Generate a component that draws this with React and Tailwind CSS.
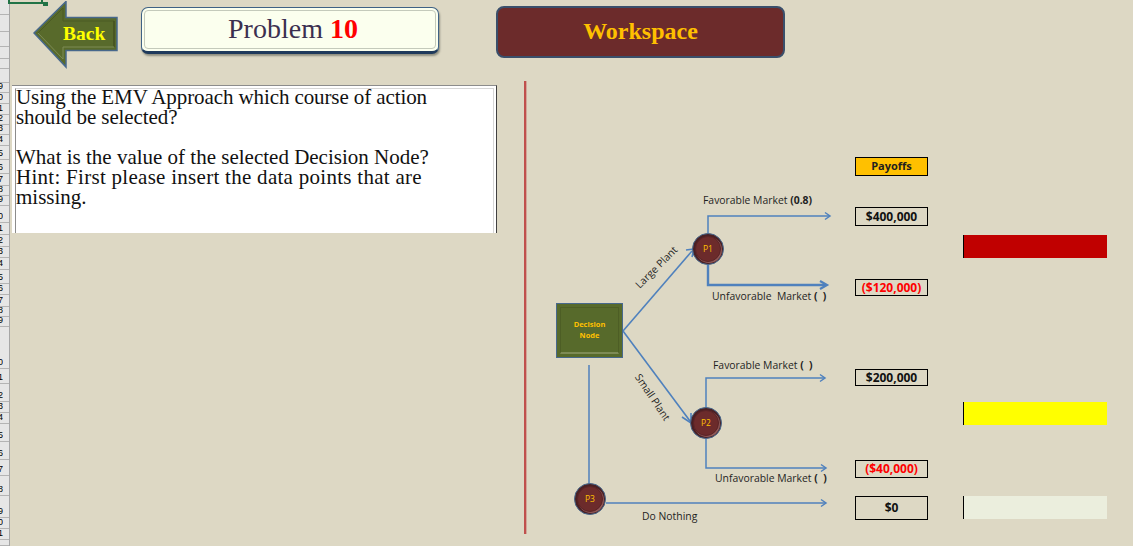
import React from 'react';

const SERIF = "font-['Liberation_Serif',serif]";
const SANS = "font-['Open_Sans',sans-serif]";

// excel row header: [row height, last digit of the row number]
const ROWS = [
  [15, ''], [17, ''], [15, ''], [12, ''], [10, ''], [14, ''], [10, '9'], [11, '0'], [11, '1'], [10, '2'],
  [10, '3'], [11, '4'], [14, '5'], [14, '6'], [12, '7'], [10, '8'], [10, '9'], [17, '0'], [12, '1'], [12, '2'],
  [11, '3'], [12, '4'], [14, '5'], [11, '6'], [12, '7'], [10, '8'], [10, '9'], [42, '0'], [15, '1'], [18, '2'],
  [11, '3'], [11, '4'], [18, '5'], [18, '6'], [16, '7'], [20, '8'], [22, '9'], [11, '0'], [11, '1'], [6, ''],
];

const PAYOFFS = [
  { label: 'Payoffs', box: 'top-[76px] h-[19px] text-[11px] bg-[#ffc000] text-[#1f1f1f]' },
  { label: '$400,000', box: 'top-[126px] h-[19px] text-[12px] text-[#111111]' },
  { label: '($120,000)', box: 'top-[198px] h-[17px] text-[12px] text-[#ff0000]' },
  { label: '$200,000', box: 'top-[288px] h-[17px] text-[12px] text-[#111111]' },
  { label: '($40,000)', box: 'top-[379px] h-[18px] text-[12px] text-[#ff0000]' },
  { label: '$0', box: 'top-[415px] h-[24px] text-[12px] text-[#111111]' },
];

const LABELS = [
  { text: 'Favorable Market ', bold: '(0.8)', box: 'left-[177px] top-[112px]' },
  { text: 'Unfavorable  Market ', bold: '(  )', box: 'left-[186px] top-[208px]' },
  { text: 'Favorable Market ', bold: '(  )', box: 'left-[187px] top-[277px]' },
  { text: 'Unfavorable Market ', bold: '(  )', box: 'left-[189px] top-[390px]' },
  { text: 'Do Nothing', bold: '', box: 'left-[116px] top-[428px]' },
];

function RowHeader() {
  return (
    <div className="w-[10px] h-full shrink-0 bg-[#e6e6e6] border-r border-[#a6a6a6] overflow-hidden">
      {ROWS.map(([height, digit], i) => (
        <div key={i} className="border-b border-[#b4b4b4] flex items-end" style={{ height }}>
          <div className="w-[3px] h-[9px] mb-[1px] overflow-hidden flex justify-end">
            <span className="text-[9px] leading-[9px] font-['Liberation_Sans',sans-serif] text-black">{digit}</span>
          </div>
        </div>
      ))}
    </div>
  );
}

function BackButton() {
  return (
    <div className="relative w-[86px] h-[68px] mt-[1px] shrink-0">
      <svg width="86" height="68" viewBox="0 0 86 68">
        <polygon points="1,32 33,0.5 33,16.5 84,16.5 84,49.5 33,49.5 33,66" fill="#586a2b" stroke="#47688c" strokeWidth="1.5" />
        <polyline points="5,32 30,7 30,20 81,20" fill="none" stroke="#4a5a24" strokeWidth="1" />
        <polyline points="81,20 81,46" fill="none" stroke="#43511f" strokeWidth="1.5" />
        <polyline points="5,32 30,58 30,46 81,46" fill="none" stroke="#7d8b55" strokeWidth="1" />
      </svg>
      <span className={`absolute left-[30px] top-[20px] text-[19.5px] leading-[26px] font-bold text-[#ffff00] ${SERIF}`}>Back</span>
    </div>
  );
}

function ProbNode({ label, box }) {
  return (
    <div className={`absolute w-[32px] h-[32px] rounded-full bg-[#4a2024] border border-[#47688c] flex items-center justify-center ${box}`}>
      <div className="w-[26px] h-[26px] rounded-full bg-[#6c2b2b] border border-[#5a2326] shadow-[1px_1px_0_#8f5a59] flex items-center justify-center">
        <span className={`text-[8.5px] font-medium text-[#ffc000] ${SANS}`}>{label}</span>
      </div>
    </div>
  );
}

function Diagram() {
  return (
    <div className="relative flex-1 h-full">
      <svg className="absolute inset-0" width="607" height="465" viewBox="526 81 607 465" fill="none" stroke="#4f81bd">
        <path d="M623 331 L692 251" strokeWidth="1.6" />
        <path d="M686 250 L694 249 L692 257" strokeWidth="1.6" />
        <path d="M623 331 L690 421" strokeWidth="1.6" />
        <path d="M682 417 L691 423 L691 413" strokeWidth="1.6" />
        <path d="M708 233 V216 H829" strokeWidth="1.5" />
        <path d="M825 212.5 L830 216 L825 219.5" strokeWidth="1.5" />
        <path d="M708 265 V285 H825" strokeWidth="2.4" />
        <path d="M820 281 L827 285 L820 289" strokeWidth="2.2" />
        <path d="M706 408 V378 H824" strokeWidth="1.5" />
        <path d="M820 374.5 L825 378 L820 381.5" strokeWidth="1.5" />
        <path d="M706 439 V468 H825" strokeWidth="1.5" />
        <path d="M821 464.5 L826 468 L821 471.5" strokeWidth="1.5" />
        <path d="M589 365 V484" strokeWidth="1.5" />
        <path d="M606 503 H825" strokeWidth="1.5" />
        <path d="M821 499.5 L826 503 L821 506.5" strokeWidth="1.5" />
      </svg>

      <div className="absolute left-[30px] top-[222px] w-[67px] h-[55px] bg-[#576a2b] border border-[#47688c] p-[3px]">
        <div className="w-full h-full border border-[#4d5e25] border-b-2 border-b-[#7d8b55] flex flex-col items-center justify-center">
          <span className={`text-[7.5px] leading-[11px] font-bold text-[#ffc000] ${SANS}`}>Decision</span>
          <span className={`text-[7.5px] leading-[11px] font-bold text-[#ffc000] ${SANS}`}>Node</span>
        </div>
      </div>

      <ProbNode label="P1" box="left-[166px] top-[152px]" />
      <ProbNode label="P2" box="left-[164px] top-[326px]" />
      <ProbNode label="P3" box="left-[48px] top-[402px]" />

      {LABELS.map((item) => (
        <span key={item.box} className={`absolute whitespace-pre text-[10.4px] leading-[14px] text-[#1f1f1f] ${SANS} ${item.box}`}>
          {item.text}
          <span className="font-bold">{item.bold}</span>
        </span>
      ))}
      <span className={`absolute left-[103px] top-[179px] rotate-[-45deg] text-[10.4px] leading-[14px] text-[#1f1f1f] ${SANS}`}>Large Plant</span>
      <span className={`absolute left-[100px] top-[309px] rotate-[56deg] text-[10.4px] leading-[14px] text-[#1f1f1f] ${SANS}`}>Small Plant</span>

      {PAYOFFS.map((cell) => (
        <div key={cell.label} className={`absolute left-[329px] w-[73px] border border-black flex items-center justify-center font-bold ${SANS} ${cell.box}`}>
          {cell.label}
        </div>
      ))}

      <div className="absolute left-[437px] top-[154px] w-[144px] h-[23px] bg-[#c00000] border-l border-black" />
      <div className="absolute left-[437px] top-[321px] w-[144px] h-[23px] bg-[#ffff00] border-l border-black" />
      <div className="absolute left-[437px] top-[415px] w-[144px] h-[23px] bg-[#ebeedd] border-l border-black" />
    </div>
  );
}

export default function App() {
  return (
    <div className="w-[1133px] h-[546px] bg-[#ddd8c4] flex relative overflow-hidden">
      <RowHeader />

      {/* selected cell corner */}
      <div className="absolute left-[8px] top-[-2px] w-[35px] h-[6px] border-2 border-[#217346]" />
      <div className="absolute left-[43px] top-[2px] w-[5px] h-[4px] bg-[#217346]" />

      <div className="flex-1 flex flex-col">
        <div className="h-[81px] flex items-start pl-[23px]">
          <BackButton />
          <div className="ml-[22px] mt-[7px] w-[298px] h-[47px] rounded-[7px] bg-[#fbffee] border border-[#3f6285] border-b-[3px] border-b-[#1f3a5c] shadow-[1px_2px_2px_#8f8f80] p-[2px] shrink-0">
            <div className={`h-full rounded-[4px] border border-[#c4cabb] flex items-center justify-center pl-[6px] pb-[1px] text-[28px] text-[#3b3050] ${SERIF}`}>
              <span>Problem <b className="text-[#ff0000]">10</b></span>
            </div>
          </div>
          <div className={`ml-[57px] mt-[6px] w-[289px] h-[52px] rounded-[8px] bg-[#6c2b2b] border-2 border-[#3a4f6b] flex items-center justify-center pb-[2px] text-[24px] font-bold text-[#ffc000] ${SERIF}`}>
            Workspace
          </div>
        </div>

        <div className="flex-1 flex items-start min-h-0">
          <div className="ml-[2px] mt-[4px] w-[485px] h-[148px] bg-white border-t border-t-[#8c8c8c] border-r border-r-[#404040] pt-[2px] pl-[3px] pr-[2px] shrink-0">
            <div className={`h-full border-t border-t-[#d6d6d6] border-l border-l-[#8c8c8c] border-r border-r-[#d6d6d6] text-[21px] leading-[20px] text-[#111111] ${SERIF}`}>
              <p className="-mt-[2px] w-[450px] tracking-[-0.1px]">Using the EMV Approach which course of action should be selected?</p>
              <p className="mt-[20px] w-[450px]">
                What is the value of the selected Decision Node? <span className="tracking-[0.28px]">Hint: First please insert the data points that are</span> missing.
              </p>
            </div>
          </div>
          <div className="ml-[27px] w-[2px] h-[453px] bg-[#c0504d] shadow-[1px_0_0_#d2a79a] shrink-0" />
          <Diagram />
        </div>
      </div>
    </div>
  );
}
